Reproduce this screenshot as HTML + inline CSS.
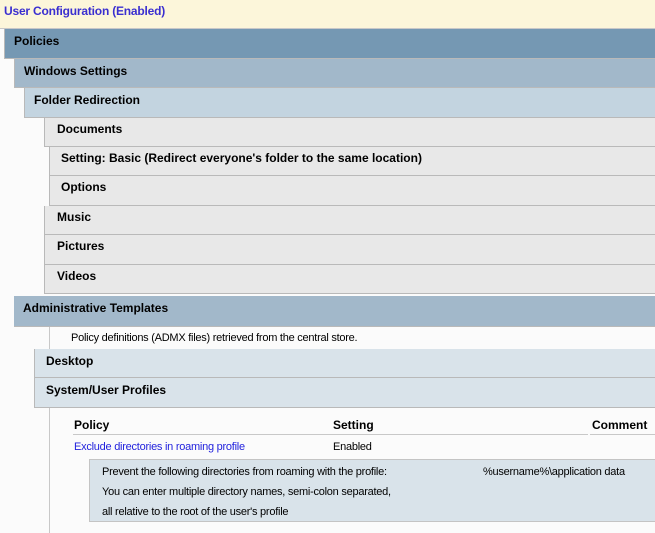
<!DOCTYPE html>
<html><head><style>
body{margin:0;width:655px;height:533px;overflow:hidden;background:#fbfbfb;font-family:"Liberation Sans",sans-serif;font-size:11px;letter-spacing:-0.25px;color:#000;position:relative}
.b{position:absolute;right:0;box-sizing:border-box;font-weight:bold;font-size:12px;letter-spacing:0;padding-left:9px;border-left:1px solid #b9b9b9;border-bottom:1px solid #b9b9b9}
.t{position:absolute;white-space:nowrap}
</style></head><body>
<div style="position:absolute;left:0;top:0;width:655px;height:28px;background:#fcf6da;border-bottom:1px solid #c8c8c8"></div>
<div class="t" style="left:4px;top:4px;color:#3a2fd0;font-weight:bold;font-size:12px;letter-spacing:-0.2px">User Configuration (Enabled)</div>
<div class="b" style="left:4px;top:29px;height:30px;line-height:24px;background:#7598b3">Policies</div>
<div class="b" style="left:14px;top:59px;height:29px;line-height:24px;background:#a2b8ca">Windows Settings</div>
<div class="b" style="left:24px;top:88px;height:30px;line-height:24px;background:#c3d4e0">Folder Redirection</div>
<div class="b" style="left:44px;top:118px;height:29px;line-height:22px;background:#e8e8e8;padding-left:12px">Documents</div>
<div class="b" style="left:49px;top:147px;height:29px;line-height:22px;background:#e8e8e8;padding-left:11px">Setting: Basic (Redirect everyone's folder to the same location)</div>
<div class="b" style="left:49px;top:176px;height:30px;line-height:22px;background:#e8e8e8;padding-left:11px">Options</div>
<div class="b" style="left:44px;top:206px;height:29px;line-height:22px;background:#e8e8e8;padding-left:12px">Music</div>
<div class="b" style="left:44px;top:235px;height:30px;line-height:22px;background:#e8e8e8;padding-left:12px">Pictures</div>
<div class="b" style="left:44px;top:265px;height:29px;line-height:22px;background:#e8e8e8;padding-left:12px">Videos</div>
<div class="b" style="left:14px;top:296px;height:31px;line-height:24px;background:#a2b8ca;border-left:none">Administrative Templates</div>
<div style="position:absolute;left:49px;top:327px;width:1px;height:22px;background:#c8c8c8"></div>
<div class="t" style="left:71px;top:332px">Policy definitions (ADMX files) retrieved from the central store.</div>
<div class="b" style="left:34px;top:349px;height:29px;line-height:24px;background:#d9e3ea;padding-left:11px">Desktop</div>
<div class="b" style="left:34px;top:378px;height:30px;line-height:24px;background:#d9e3ea;padding-left:11px">System/User Profiles</div>
<div style="position:absolute;left:49px;top:408px;width:1px;height:125px;background:#c8c8c8"></div>
<div class="t" style="left:74px;top:418px;font-weight:bold;font-size:12px;letter-spacing:0">Policy</div>
<div class="t" style="left:333px;top:418px;font-weight:bold;font-size:12px;letter-spacing:0">Setting</div>
<div class="t" style="left:592px;top:418px;font-weight:bold;font-size:12px;letter-spacing:0">Comment</div>
<div style="position:absolute;left:73px;top:434px;width:586px;height:1px;background:#c8c8c8"></div>
<div style="position:absolute;left:588px;top:434px;width:2px;height:1px;background:#fbfbfb"></div>
<div class="t" style="left:74px;top:441px;color:#2222dd">Exclude directories in roaming profile</div>
<div class="t" style="left:333px;top:441px">Enabled</div>
<div style="position:absolute;left:89px;top:459px;width:566px;height:63px;background:#d9e3ea;border-left:1px solid #c4c4c4;border-top:1px solid #c4c4c4;border-bottom:1px solid #c4c4c4;box-sizing:border-box"></div>
<div class="t" style="left:102px;top:466px">Prevent the following directories from roaming with the profile:</div>
<div class="t" style="left:483px;top:466px">%username%\application data</div>
<div class="t" style="left:102px;top:486px">You can enter multiple directory names, semi-colon separated,</div>
<div class="t" style="left:102px;top:506px">all relative to the root of the user's profile</div>
</body></html>
